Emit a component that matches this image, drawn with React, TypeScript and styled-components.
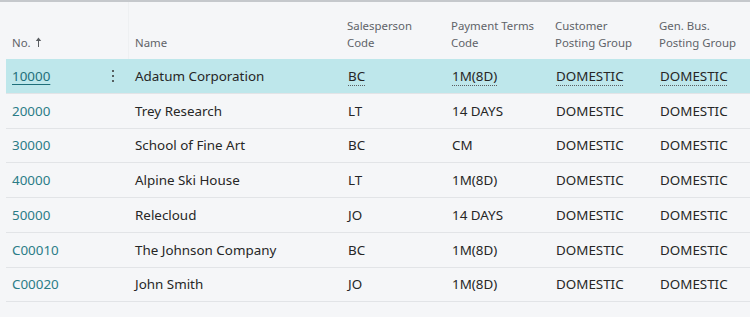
import React from "react";
import styled, { createGlobalStyle } from "styled-components";

const Global = createGlobalStyle`
  html, body { margin: 0; padding: 0; background: #f5f6f8; }
  body { font-family: "Noto Sans", "Open Sans", sans-serif; }
`;

const Page = styled.div`
  width: 750px;
  height: 317px;
  overflow: hidden;
  border-top: 2px solid #c5c8cc;
  box-sizing: border-box;
  background: #f5f6f8;
  padding-left: 6px;
`;

const Grid = styled.div`
  display: grid;
  grid-template-columns: 92px 30px 213px 104px 104px 104px 1fr;
`;

const HeadCell = styled.div<{ $sep?: boolean }>`
  height: 57px;
  box-sizing: border-box;
  display: flex;
  align-items: flex-end;
  padding: 0 7px 8px 6px;
  font-size: 11.4px;
  line-height: 17px;
  color: #606368;
  border-left: ${(p) => (p.$sep ? "1px solid #eef0f2" : "none")};
`;

const Row = styled.div<{ $selected?: boolean }>`
  display: contents;
  & > div {
    background: ${(p) => (p.$selected ? "#bee7eb" : "transparent")};
  }
`;

const Cell = styled.div<{ $pl?: number }>`
  height: 34.75px;
  box-sizing: border-box;
  display: flex;
  align-items: center;
  padding-left: ${(p) => p.$pl ?? 7}px;
  font-size: 13.4px;
  color: #262626;
  border-bottom: 1px solid #e2e4e7;
  white-space: nowrap;
`;

const NoLink = styled.span<{ $selected?: boolean }>`
  color: ${(p) => (p.$selected ? "#1f6f7a" : "#2b7c87")};
  text-decoration: ${(p) => (p.$selected ? "underline" : "none")};
  text-underline-offset: 3px;
`;

const Editable = styled.span<{ $selected?: boolean }>`
  text-decoration: ${(p) => (p.$selected ? "underline dotted #5a5d61" : "none")};
  text-underline-offset: 4px;
  text-decoration-thickness: 1px;
`;

const DotsWrap = styled.div`
  display: flex;
  flex-direction: column;
  gap: 3px;
  margin-left: 14px;
`;

const Dot = styled.span`
  width: 2px;
  height: 2px;
  border-radius: 50%;
  background: #333;
`;

const SortArrow = () => (
  <svg width="7" height="10" viewBox="0 0 7 10" style={{ marginLeft: 4, marginBottom: 4 }}>
    <path d="M3.5 1.5 V10" stroke="#5a5d61" strokeWidth="1" fill="none" />
    <path d="M0.8 4 L3.5 0.5 L6.2 4 Z" fill="#5a5d61" />
  </svg>
);

type R = { no: string; name: string; sp: string; pt: string; cpg: string; gbpg: string };

const rows: R[] = [
  { no: "10000", name: "Adatum Corporation", sp: "BC", pt: "1M(8D)", cpg: "DOMESTIC", gbpg: "DOMESTIC" },
  { no: "20000", name: "Trey Research", sp: "LT", pt: "14 DAYS", cpg: "DOMESTIC", gbpg: "DOMESTIC" },
  { no: "30000", name: "School of Fine Art", sp: "BC", pt: "CM", cpg: "DOMESTIC", gbpg: "DOMESTIC" },
  { no: "40000", name: "Alpine Ski House", sp: "LT", pt: "1M(8D)", cpg: "DOMESTIC", gbpg: "DOMESTIC" },
  { no: "50000", name: "Relecloud", sp: "JO", pt: "14 DAYS", cpg: "DOMESTIC", gbpg: "DOMESTIC" },
  { no: "C00010", name: "The Johnson Company", sp: "BC", pt: "1M(8D)", cpg: "DOMESTIC", gbpg: "DOMESTIC" },
  { no: "C00020", name: "John Smith", sp: "JO", pt: "1M(8D)", cpg: "DOMESTIC", gbpg: "DOMESTIC" },
];

export default function App() {
  return (
    <>
      <Global />
      <Page>
        <Grid>
          <HeadCell>
            No.
            <SortArrow />
          </HeadCell>
          <HeadCell />
          <HeadCell $sep>Name</HeadCell>
          <HeadCell>Salesperson<br />Code</HeadCell>
          <HeadCell>Payment Terms<br />Code</HeadCell>
          <HeadCell>Customer<br />Posting Group</HeadCell>
          <HeadCell>Gen. Bus.<br />Posting Group</HeadCell>
          {rows.map((r, i) => {
            const sel = i === 0;
            return (
              <Row key={r.no} $selected={sel}>
                <Cell $pl={6}>
                  <NoLink $selected={sel}>{r.no}</NoLink>
                </Cell>
                <Cell $pl={0}>
                  {sel && (
                    <DotsWrap>
                      <Dot />
                      <Dot />
                      <Dot />
                    </DotsWrap>
                  )}
                </Cell>
                <Cell>{r.name}</Cell>
                <Cell><Editable $selected={sel}>{r.sp}</Editable></Cell>
                <Cell><Editable $selected={sel}>{r.pt}</Editable></Cell>
                <Cell><Editable $selected={sel}>{r.cpg}</Editable></Cell>
                <Cell><Editable $selected={sel}>{r.gbpg}</Editable></Cell>
              </Row>
            );
          })}
        </Grid>
      </Page>
    </>
  );
}
